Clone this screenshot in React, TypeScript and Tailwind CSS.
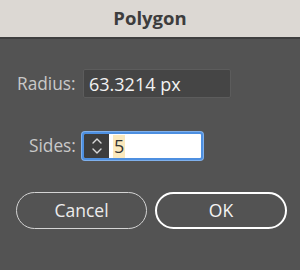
export default function App() {
  return (
    <div
      className="w-[300px] h-[270px] bg-[#535353] flex flex-col overflow-hidden"
      style={{ fontFamily: '"Open Sans", "DejaVu Sans", sans-serif' }}
    >
      <div className="h-[39px] shrink-0 bg-[#dcd8d3] border-b-2 border-[#3f3f3f] flex items-center justify-center">
        <span className="text-[18.5px] font-bold text-[#3d3d3d] leading-none">Polygon</span>
      </div>

      <div className="mt-[30px] flex items-center">
        <div className="w-[83px] pl-[17px] shrink-0">
          <span className="text-[17.3px] text-[#c9c9c9] leading-none">Radius:</span>
        </div>
        <div className="w-[148px] h-[29px] bg-[#454545] border border-[#5c5c5c] rounded-[2px] flex items-center pl-[5px]">
          <span className="text-[18px] text-[#f2f2f2] leading-none">63.3214 px</span>
        </div>
      </div>

      <div className="mt-[34px] flex items-center">
        <div className="w-[82px] pl-[29px] shrink-0">
          <span className="text-[17.3px] text-[#c9c9c9] leading-none">Sides:</span>
        </div>
        <div className="w-[121px] h-[28px] rounded-[3px] border-2 border-[#4d8fe0] bg-white flex overflow-hidden shadow-[0_0_0_1px_#7fb0ec]">
          <div className="w-[25px] h-full bg-[#3d3d3d] flex items-center justify-center">
            <svg width="12" height="20" viewBox="0 0 12 20" fill="none" stroke="#d8d8d8" strokeWidth="1.4" strokeLinecap="round" strokeLinejoin="round">
              <path d="M2 7 L6 3 L10 7" />
              <path d="M2 13 L6 17 L10 13" />
            </svg>
          </div>
          <div className="flex items-center pl-[4px]">
            <span className="bg-[#fbe9bd] px-[1px] text-[18px] text-[#333] leading-[23px]">5</span>
          </div>
        </div>
      </div>

      <div className="mt-[32px] flex pl-[16px] gap-[8px]">
        <button className="w-[131px] h-[37px] rounded-full border-[1.5px] border-[#d4d4d4] text-[17.5px] text-[#ececec] flex items-center justify-center">
          Cancel
        </button>
        <button className="w-[132px] h-[37px] rounded-full border-[2.5px] border-white text-[17.5px] text-[#f4f4f4] flex items-center justify-center">
          OK
        </button>
      </div>
    </div>
  );
}
